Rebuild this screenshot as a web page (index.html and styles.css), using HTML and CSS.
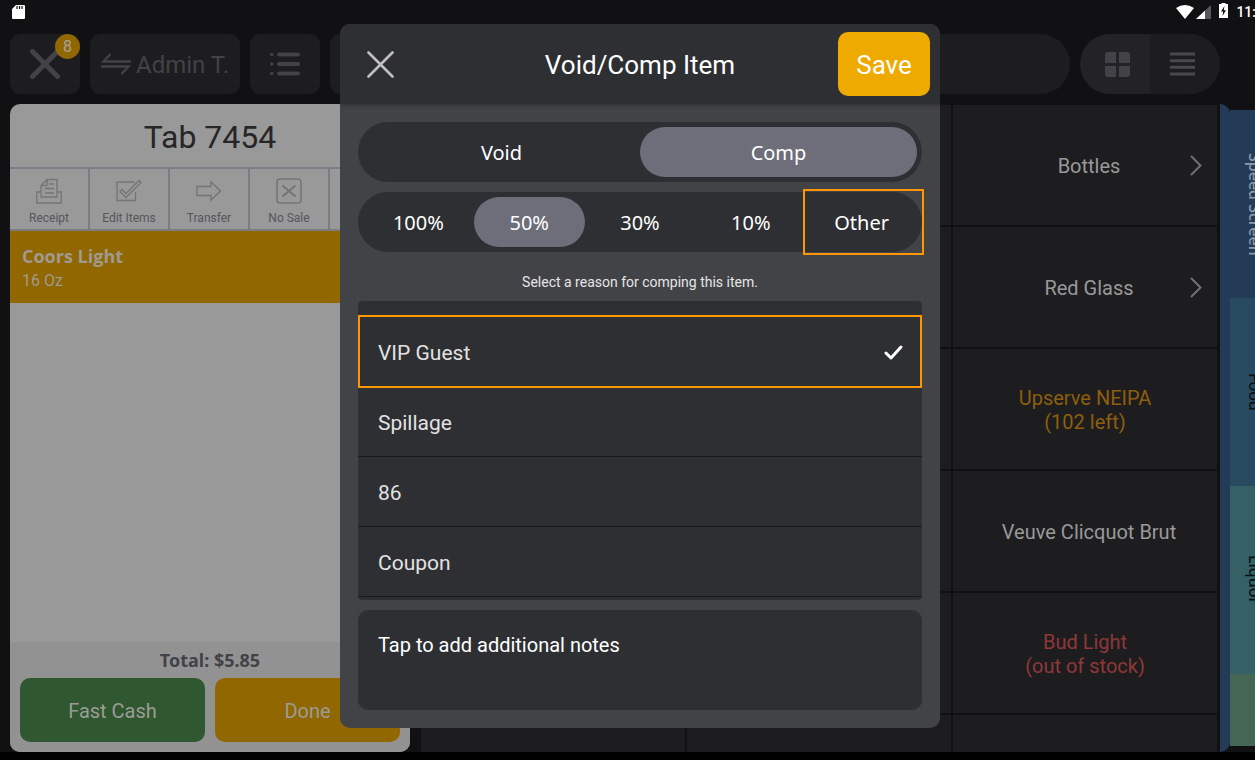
FILE: index.html
```
<!DOCTYPE html>
<html lang="en">
<head>
  <meta charset="UTF-8" />
  <meta name="viewport" content="width=device-width, initial-scale=1.0"/>
  <title>Void/Comp Item</title>
  <link rel="stylesheet" href="styles.css">
</head>
<body>

<div class="app">
  <!-- Android status bar -->
  <div class="status-bar">
    <svg width="13" height="14" viewBox="0 0 13 14"><path d="M4 0h8q1 0 1 1v12q0 1-1 1H1q-1 0-1-1V4z" fill="#fff"/><path d="M5 1v3M7.500 1v3M10 1v3" stroke="#111113" stroke-width="1.200"/></svg>
    <div class="status-right">
      <svg width="18" height="14" viewBox="0 0 18 14"><path d="M0 3Q9-3 18 3L9 14z" fill="#fff"/></svg>
      <svg width="15" height="14" viewBox="0 0 15 14"><path d="M15 0v14H0z" fill="#58585a"/><path d="M9 5.600V14H0z" fill="#fff"/></svg>
      <svg class="battery" width="9" height="15" viewBox="0 0 9 15"><path d="M2.500 0h4v1H9v14H0V1h2.500z" fill="#fff"/><path d="M5.500 3L2 8.500h2.200L3.500 13 7 7.300H4.800z" fill="#111113"/></svg>
      <span class="clock">11:</span>
    </div>
  </div>

  <div class="toolbar">
    <button class="tool-btn" aria-label="Close tab">
      <svg width="30" height="30" viewBox="0 0 30 30"><path d="M2.500 2.500l25 25M27.500 2.500l-25 25" stroke="#424248" stroke-width="5" stroke-linecap="round"/></svg>
      <span class="badge">8</span>
    </button>
    <button class="tool-btn user-btn">
      <svg width="30" height="22" viewBox="0 0 30 22" fill="none" stroke="#424248" stroke-width="2.400"><path d="M30 8.500H2.500L9.500 1M0 13.500h27.500L20.500 21"/></svg>
      <span>Admin T.</span>
    </button>
    <button class="tool-btn" aria-label="List">
      <svg width="30" height="24" viewBox="0 0 30 24" stroke="#424248" stroke-width="4" stroke-linecap="round"><path d="M9 2.500h19M9 12h19M9 21.500h19"/><path stroke-width="3.500" d="M1.800 2.500h.01M1.800 12h.01M1.800 21.500h.01"/></svg>
    </button>
    <button class="tool-btn" aria-label="Search"></button>
    <input class="search" type="text" aria-label="Search menu">
    <div class="view-switch">
      <button class="view-btn active" aria-label="Grid view">
        <svg width="25" height="25" viewBox="0 0 25 25" fill="#424248"><path d="M3 0h8v11H0V3q0-3 3-3zM14 0h8q3 0 3 3v8H14zM0 14h11v11H3q-3 0-3-3zM14 14h11v8q0 3-3 3h-8z"/></svg>
      </button>
      <button class="view-btn" aria-label="List view">
        <svg width="25" height="24" viewBox="0 0 25 24" stroke="#4a4a4c" stroke-width="3"><path d="M0 2h25M0 8.700h25M0 15.300h25M0 22h25"/></svg>
      </button>
    </div>
  </div>

  <div class="main">
    <!-- Current tab -->
    <div class="tab-panel">
      <h1>Tab 7454</h1>
      <div class="tab-actions">
        <button>
          <svg width="26" height="26" viewBox="0 0 26 26" fill="none" stroke="#757578" stroke-width="1.300"><path d="M5 14H.8v11h24.400V14H21"/><path d="M5 19V7.500L11 1.500h10V19zM5 7.500h6v-6M13 6h5M9 10.500h9M9 15h9"/></svg>
          <span>Receipt</span>
        </button>
        <button>
          <svg width="26" height="26" viewBox="0 0 26 26" fill="none" stroke="#757578" stroke-width="1.300"><path d="M18.500 4H1v18.500h18.500V14"/><path d="M4 13.500l2-2 4 4L23 2.500l2 2L10 19.500z"/></svg>
          <span>Edit Items</span>
        </button>
        <button>
          <svg width="26" height="26" viewBox="0 0 26 26" fill="none" stroke="#757578" stroke-width="1.400"><path d="M1 8.500h14V4l9.500 9-9.500 9v-4.500H1z"/></svg>
          <span>Transfer</span>
        </button>
        <button>
          <svg width="26" height="26" viewBox="0 0 26 26" fill="none" stroke="#757578" stroke-width="1.600"><rect x="1" y="1" width="24" height="24" rx="3"/><path d="M6.500 7.500l13 11M19.500 7.500l-13 11" stroke-width="2.200"/></svg>
          <span>No Sale</span>
        </button>
        <button aria-label="More"></button>
      </div>
      <div class="order-item">
        <div class="item-name">Coors Light</div>
        <div class="item-mod">16 Oz</div>
      </div>
      <div class="tab-footer">
        <div class="total">Total: $5.85</div>
        <div class="pay-buttons">
          <button class="green">Fast Cash</button>
          <button class="amber">Done</button>
        </div>
      </div>
    </div>

    <!-- Menu -->
    <div class="menu-grid">
      <button class="tile"></button><button class="tile"></button>
      <button class="tile folder">Bottles <svg width="12" height="21" viewBox="0 0 12 21" fill="none" stroke="#717172" stroke-width="2"><path d="M1 1l9.500 9.500L1 20"/></svg></button>
      <button class="tile"></button><button class="tile"></button>
      <button class="tile folder">Red Glass <svg width="12" height="21" viewBox="0 0 12 21" fill="none" stroke="#717172" stroke-width="2"><path d="M1 1l9.500 9.500L1 20"/></svg></button>
      <button class="tile"></button><button class="tile"></button>
      <button class="tile low">Upserve NEIPA<br>(102 left)</button>
      <button class="tile"></button><button class="tile"></button>
      <button class="tile single">Veuve Clicquot Brut</button>
      <button class="tile"></button><button class="tile"></button>
      <button class="tile out">Bud Light<br>(out of stock)</button>
      <button class="tile"></button><button class="tile"></button><button class="tile"></button>
    </div>

    <div class="rail">
      <div class="rail-edge"></div>
      <div class="rail-tabs">
        <button class="rail-tab speed">Speed Screen</button>
        <button class="rail-tab food">Food</button>
        <button class="rail-tab liquor">Liquor</button>
        <button class="rail-tab other"></button>
      </div>
    </div>
  </div>

  <!-- Void/Comp dialog -->
  <div class="overlay">
    <form class="modal" role="dialog" aria-labelledby="modal-title">
      <div class="modal-header">
        <button type="button" class="close" aria-label="Close">
          <svg width="27" height="27" viewBox="0 0 27 27"><path d="M1.500 1.500l24 24M25.500 1.500l-24 24" stroke="#c0c0c1" stroke-width="2.600" stroke-linecap="round"/></svg>
        </button>
        <h2 id="modal-title">Void/Comp Item</h2>
        <button type="button" class="save">Save</button>
      </div>
      <div class="modal-body">
        <div class="segments">
          <label><input type="radio" name="type"><span>Void</span></label>
          <label><input type="radio" name="type" checked><span>Comp</span></label>
        </div>
        <div class="segments">
          <label><input type="radio" name="amount"><span>100%</span></label>
          <label><input type="radio" name="amount" checked><span>50%</span></label>
          <label><input type="radio" name="amount"><span>30%</span></label>
          <label><input type="radio" name="amount"><span>10%</span></label>
          <label class="marked"><input type="radio" name="amount"><span>Other</span></label>
        </div>
        <p class="hint">Select a reason for comping this item.</p>
        <div class="reasons">
          <label class="marked"><input type="radio" name="reason" checked>VIP Guest
            <svg class="check" width="19" height="15" viewBox="0 0 19 15" fill="none" stroke="#fff" stroke-width="3" stroke-linecap="round" stroke-linejoin="round"><path d="M2 8l5 5L17 2"/></svg>
          </label>
          <label><input type="radio" name="reason">Spillage</label>
          <label><input type="radio" name="reason">86</label>
          <label><input type="radio" name="reason">Coupon</label>
        </div>
        <textarea class="notes" aria-label="Additional notes" placeholder="Tap to add additional notes"></textarea>
      </div>
    </form>
  </div>
</div>

</body>
</html>
```
FILE: styles.css
```
* {
  box-sizing: border-box;
}
body {
  margin: 0;
  background: #000;
  font-family: Roboto, Arial, sans-serif;
  overflow: hidden;
}
button, input, textarea {
  font-family: inherit;
  border: none;
  margin: 0;
  padding: 0;
}
button {
  cursor: pointer;
}
svg {
  display: block;
  flex: none;
}

/* the right rail runs past the edge of the window */
.app {
  position: relative;
  display: flex;
  flex-direction: column;
  width: calc(100% + 25px);
  height: calc(100vh - 8px);
  background: #111113;
  overflow: hidden;
}

/* status bar */
.status-bar {
  display: flex;
  justify-content: space-between;
  align-items: center;
  height: 24px;
  padding: 0 24px 0 12px;
  flex: none;
}
.status-right {
  display: flex;
  align-items: center;
  gap: 2px;
}
.battery {
  margin: 0 6px 3px;
}
.clock {
  color: #fff;
  font-size: 14px;
  font-weight: 500;
}

/* toolbar */
.toolbar {
  display: flex;
  gap: 10px;
  padding: 10px 60px 10px 10px;
  flex: none;
}
.tool-btn {
  position: relative;
  display: flex;
  align-items: center;
  justify-content: center;
  gap: 5px;
  width: 70px;
  height: 60px;
  border-radius: 10px;
  background: #1d1d1f;
  color: #424248;
  font-size: 24px;
}
.user-btn {
  width: 150px;
}
.user-btn span {
  padding-top: 2px;
}
.badge {
  position: absolute;
  top: 0;
  right: 0;
  width: 25px;
  height: 25px;
  border-radius: 50%;
  background: #906700;
  color: #a8a199;
  font-size: 16px;
  line-height: 25px;
}
.search {
  flex: 1;
  height: 60px;
  border-radius: 30px;
  background: #1d1d1f;
}
.view-switch {
  display: flex;
  width: 140px;
  border-radius: 30px;
  overflow: hidden;
}
.view-btn {
  display: flex;
  align-items: center;
  justify-content: center;
  flex: 1;
  background: #1d1d1f;
}
.view-btn.active {
  background: #232326;
  padding-left: 5px;
}
.view-btn:last-child {
  padding-right: 5px;
}

.main {
  display: flex;
  flex: 1;
  min-height: 0;
}

/* current tab */
.tab-panel {
  display: flex;
  flex-direction: column;
  width: 400px;
  margin: 0 11px 0 10px;
  border-radius: 10px;
  background: #999;
  overflow: hidden;
  flex: none;
}
.tab-panel h1 {
  margin: 0;
  height: 63px;
  line-height: 67px;
  font-size: 32px;
  font-weight: 400;
  text-align: center;
  color: #262628;
}
.tab-actions {
  display: flex;
  border-top: 2px solid #7c7c84;
  border-bottom: 2px solid #7c7c84;
}
.tab-actions button {
  display: flex;
  flex-direction: column;
  align-items: center;
  gap: 6px;
  width: 20%;
  height: 60px;
  padding-top: 9px;
  border-right: 2px solid #7c7c84;
  background: none;
  color: #55555c;
  font-size: 12px;
  line-height: 16px;
}
.tab-actions button:last-child {
  border-right: none;
}
.order-item {
  height: 72px;
  padding: 13px 12px;
  background: #906700;
  color: #a09a90;
}
.item-name {
  font-family: "Open Sans", sans-serif;
  font-size: 18px;
  font-weight: bold;
  line-height: 24px;
}
.item-mod {
  font-size: 16px;
  line-height: 25px;
}
.tab-footer {
  margin-top: auto;
  padding: 6px 10px 10px;
  background: #929292;
}
.total {
  font-family: "Noto Sans", sans-serif;
  font-size: 18px;
  font-weight: bold;
  line-height: 24px;
  text-align: center;
  color: #424248;
}
.pay-buttons {
  display: flex;
  gap: 10px;
  margin-top: 6px;
}
.pay-buttons button {
  flex: 1;
  height: 64px;
  padding-top: 2px;
  border-radius: 10px;
  color: #9c9c96;
  font-size: 20px;
}
.pay-buttons .green {
  background: #2f5730;
}
.pay-buttons .amber {
  background: #906700;
}

/* menu */
.menu-grid {
  display: grid;
  grid-template-columns: repeat(3, 1fr);
  grid-auto-rows: 120px;
  gap: 2px;
  flex: 1;
  margin: 1px 3px 0 0;
  overflow: hidden;
}
.tile {
  position: relative;
  padding-top: 2px;
  background: #1d1d1f;
  color: #999;
  font-size: 20px;
  line-height: 24px;
}
.folder, .single {
  padding-left: 8px;
}
.folder svg {
  position: absolute;
  right: 15px;
  top: 50px;
}
.low {
  color: #8d5e0c;
}
.out {
  color: #8e3838;
}

/* side tabs */
.rail {
  display: flex;
  width: 60px;
  flex: none;
}
.rail-edge {
  width: 10px;
  border-radius: 0 10px 10px 0;
  background: #243b58;
}
.rail-tabs {
  flex: 1;
  margin: 6px 0;
  overflow: hidden;
}
.rail-tab {
  display: flex;
  align-items: center;
  justify-content: center;
  width: 100%;
  height: 188px;
  writing-mode: vertical-rl;
  font-family: "Noto Sans", sans-serif;
  font-size: 16px;
  font-weight: 500;
  color: #0b1113;
}
.speed {
  background: #243b58;
  color: #8f98a3;
}
.food {
  background: #284a61;
}
.liquor {
  background: #356166;
}
.other {
  background: #456655;
}

/* dialog */
.overlay {
  position: absolute;
  inset: 0;
  display: flex;
  align-items: center;
  justify-content: center;
}
.modal {
  width: 600px;
  border-radius: 10px;
  background: #424347;
  color: #fff;
  overflow: hidden;
}
.modal-header {
  display: grid;
  grid-template-columns: 92px 1fr 92px;
  align-items: center;
  height: 80px;
  padding: 0 10px;
  background: #2e2f33;
  box-shadow: 0 1px 4px rgba(0, 0, 0, 0.3);
}
.modal-header h2 {
  margin: 0;
  padding-top: 2px;
  font-size: 26px;
  font-weight: 400;
  text-align: center;
}
.close {
  padding-left: 17px;
  background: none;
}
.save {
  height: 64px;
  padding-top: 2px;
  border-radius: 10px;
  background: #efaa00;
  color: #fff;
  font-size: 26px;
}
.modal-body {
  display: flex;
  flex-direction: column;
  gap: 10px;
  padding: 18px;
}
.segments {
  display: flex;
  height: 60px;
  padding: 5px;
  border-radius: 30px;
  background: #2e2f33;
}
.segments label {
  position: relative;
  flex: 1;
  font-family: "Noto Sans", sans-serif;
  font-size: 20px;
  line-height: 52px;
  text-align: center;
  cursor: pointer;
}
.segments span {
  display: block;
  height: 50px;
  border-radius: 25px;
}
.segments input:checked + span {
  background: #6d6e7a;
}
.segments input, .reasons input {
  position: absolute;
  opacity: 0;
}
.segments .marked::after {
  content: "";
  position: absolute;
  inset: -8px -7px -8px -3px;
  border: 2px solid #ff9500;
}
.hint {
  margin: 10px 0 -1px;
  font-size: 14px;
  line-height: 20px;
  text-align: center;
  color: #e6e6e6;
}
.reasons {
  padding: 16px 0 3px;
  border-radius: 4px;
  background: #2e2f33;
}
.reasons label {
  position: relative;
  display: flex;
  align-items: center;
  justify-content: space-between;
  height: 70px;
  padding: 2px 19px 0 20px;
  border-bottom: 1px solid #1b1b1d;
  font-size: 21px;
  color: #e2e2e2;
  cursor: pointer;
}
.reasons .marked::after {
  content: "";
  position: absolute;
  inset: -2px 0;
  border: 2px solid #ff9500;
}
.notes {
  height: 100px;
  padding: 23px 20px;
  border-radius: 10px;
  background: #2e2f33;
  color: #fff;
  font-size: 20px;
  line-height: 24px;
  resize: none;
}
.notes::placeholder {
  color: #fff;
}
```
